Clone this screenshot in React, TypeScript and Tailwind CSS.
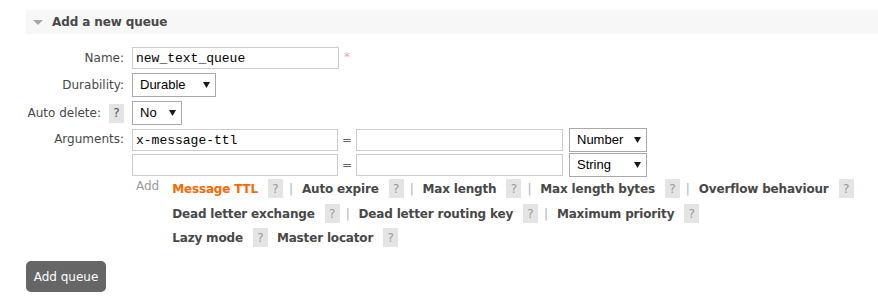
import React from 'react';

const Help = ({ dark }: { dark?: boolean }) => (
  <span
    className={`inline-flex h-[19px] w-[15px] shrink-0 items-center justify-center bg-[#e4e4e4] font-normal tracking-normal ${
      dark ? 'text-[#505060]' : 'text-[#999]'
    }`}
  >
    ?
  </span>
);

const Select = ({ value, options, width }: { value: string; options: string[]; width: string }) => (
  <div className={`relative ${width}`}>
    <select
      defaultValue={value}
      className="h-[24px] w-full appearance-none border border-[#a9a9a9] bg-white pl-[7px] font-['Liberation_Sans',Arial,sans-serif] text-[13px] text-black outline-none"
    >
      {options.map((o) => (
        <option key={o}>{o}</option>
      ))}
    </select>
    <svg
      className="pointer-events-none absolute right-[6px] top-[9px]"
      width="7"
      height="6"
      viewBox="0 0 7 6"
    >
      <polygon points="0,0 7,0 3.5,6" fill="#1a1a1a" />
    </svg>
  </div>
);

const TextInput = ({ value, width }: { value?: string; width: string }) => (
  <input
    defaultValue={value}
    className={`${width} h-[22px] border border-[#ccc] bg-white pl-[3px] font-['Liberation_Mono','Courier_New',monospace] text-[13px] text-black outline-none`}
  />
);

const Label = ({ children }: { children: React.ReactNode }) => (
  <div className="flex w-[124px] shrink-0 items-center justify-end gap-[8px] text-right">{children}</div>
);

const Sep = () => <span className="ml-[6px] mr-[9px] font-normal text-[#a8b0c0]">|</span>;

const Arg = ({ name, first }: { name: string; first?: boolean }) => (
  <span className={`flex items-center ${first ? 'text-[#ff6600]' : ''}`}>
    {name}
    <span className="ml-[10px]">
      <Help />
    </span>
  </span>
);

export default function App() {
  return (
    <div className="min-h-screen bg-white pt-[10px] font-['DejaVu_Sans',Verdana,sans-serif] text-[12px] text-[#484848]">
      {/* section header */}
      <div className="ml-[26px] flex h-[24px] items-center bg-[#f7f7f7]">
        <svg className="ml-[7px]" width="10" height="5" viewBox="0 0 10 5">
          <polygon points="0,0 10,0 5,5" fill="#a8a8a8" />
        </svg>
        <h2 className="ml-[9px] font-bold tracking-[-0.1px]">Add a new queue</h2>
      </div>

      {/* form */}
      <div className="mt-[13px] flex flex-col">
        <div className="flex items-start gap-[8px]">
          <Label>
            <span className="h-[22px] leading-[22px]">Name:</span>
          </Label>
          <div className="flex items-start">
            <TextInput value="new_text_queue" width="w-[207px]" />
            <span className="ml-[5px] mt-[1px] text-[#f9a0a8]">*</span>
          </div>
        </div>

        <div className="mt-[4px] flex items-center gap-[8px]">
          <Label>Durability:</Label>
          <Select value="Durable" options={['Durable', 'Transient']} width="w-[84px]" />
        </div>

        <div className="mt-[4px] flex items-center gap-[8px]">
          <Label>
            <span>Auto delete:</span>
            <Help dark />
          </Label>
          <Select value="No" options={['No', 'Yes']} width="w-[50px]" />
        </div>

        <div className="mt-[3px] flex items-start gap-[8px]">
          <Label>
            <span className="h-[22px] leading-[22px]">Arguments:</span>
          </Label>
          <div className="flex flex-col gap-[1px]">
            {[
              { key: 'x-message-ttl', type: 'Number' },
              { key: '', type: 'String' },
            ].map((row, i) => (
              <div key={i} className="flex items-center">
                <TextInput value={row.key} width="w-[206px]" />
                <span className="w-[18px] text-center text-[#666]">=</span>
                <TextInput width="w-[207px]" />
                <div className="ml-[6px]">
                  <Select value={row.type} options={['String', 'Number', 'Boolean', 'List']} width="w-[78px]" />
                </div>
              </div>
            ))}
          </div>
        </div>

        <div className="mt-[2px] flex items-start">
          <span className="ml-[136px] mt-[-2px] text-[#999]">Add</span>
          <div className="ml-[13px] flex flex-col font-bold tracking-[-0.17px]">
            <div className="flex h-[19px] items-center">
              <Arg name="Message TTL" first />
              <Sep />
              <Arg name="Auto expire" />
              <Sep />
              <Arg name="Max length" />
              <Sep />
              <Arg name="Max length bytes" />
              <Sep />
              <Arg name="Overflow behaviour" />
            </div>
            <div className="mt-[6px] flex h-[19px] items-center">
              <Arg name="Dead letter exchange" />
              <Sep />
              <Arg name="Dead letter routing key" />
              <Sep />
              <Arg name="Maximum priority" />
            </div>
            <div className="mt-[5px] flex h-[19px] items-center gap-[9px]">
              <Arg name="Lazy mode" />
              <Arg name="Master locator" />
            </div>
          </div>
        </div>

        <div className="mt-[14px]">
          <button className="ml-[26px] h-[31px] w-[80px] rounded-[5px] bg-[#666] text-[12px] text-white">
            Add queue
          </button>
        </div>
      </div>
    </div>
  );
}
